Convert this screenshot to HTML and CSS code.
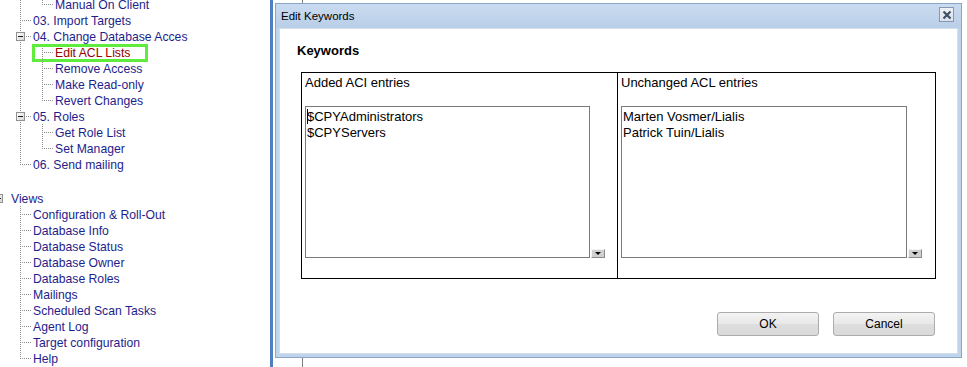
FILE: index.html
```html
<!DOCTYPE html>
<html>
<head>
<meta charset="utf-8">
<link rel="stylesheet" href="styles.css">
</head>
<body>
<div class="page">
  <div class="tree">
    <div class="row"><span class="c"></span><span class="c pipe"></span><span class="c elbow"></span><span class="t">Manual On Client</span></div>
    <div class="row"><span class="c"></span><span class="c tee"></span><span class="t">03. Import Targets</span></div>
    <div class="row"><span class="c"></span><span class="c tee"><i class="exp"></i></span><span class="t">04. Change Database Acces</span></div>
    <div class="row"><span class="c"></span><span class="c pipe"></span><span class="c tee"></span><span class="t sel">Edit ACL Lists</span></div>
    <div class="row"><span class="c"></span><span class="c pipe"></span><span class="c tee"></span><span class="t">Remove Access</span></div>
    <div class="row"><span class="c"></span><span class="c pipe"></span><span class="c tee"></span><span class="t">Make Read-only</span></div>
    <div class="row"><span class="c"></span><span class="c pipe"></span><span class="c elbow"></span><span class="t">Revert Changes</span></div>
    <div class="row"><span class="c"></span><span class="c tee"><i class="exp"></i></span><span class="t">05. Roles</span></div>
    <div class="row"><span class="c"></span><span class="c pipe"></span><span class="c tee"></span><span class="t">Get Role List</span></div>
    <div class="row"><span class="c"></span><span class="c pipe"></span><span class="c elbow"></span><span class="t">Set Manager</span></div>
    <div class="row"><span class="c"></span><span class="c elbow"></span><span class="t">06. Send mailing</span></div>
    <div class="spacer"></div>
    <div class="row"><span class="c"><i class="exp plus"></i></span><span class="t">Views</span></div>
    <div class="row"><span class="c"></span><span class="c tee"></span><span class="t">Configuration &amp; Roll-Out</span></div>
    <div class="row"><span class="c"></span><span class="c tee"></span><span class="t">Database Info</span></div>
    <div class="row"><span class="c"></span><span class="c tee"></span><span class="t">Database Status</span></div>
    <div class="row"><span class="c"></span><span class="c tee"></span><span class="t">Database Owner</span></div>
    <div class="row"><span class="c"></span><span class="c tee"></span><span class="t">Database Roles</span></div>
    <div class="row"><span class="c"></span><span class="c tee"></span><span class="t">Mailings</span></div>
    <div class="row"><span class="c"></span><span class="c tee"></span><span class="t">Scheduled Scan Tasks</span></div>
    <div class="row"><span class="c"></span><span class="c tee"></span><span class="t">Agent Log</span></div>
    <div class="row"><span class="c"></span><span class="c tee"></span><span class="t">Target configuration</span></div>
    <div class="row"><span class="c"></span><span class="c elbow"></span><span class="t">Help</span></div>
  </div>
  <div class="bar"></div>
  <div class="ws"><div class="ws-line"></div></div>

  <div class="dlg">
    <div class="title">Edit Keywords
      <span class="close"><svg width="10" height="10" viewBox="0 0 10 10"><path d="M1.5 1.5 L8.5 8.5 M8.5 1.5 L1.5 8.5" stroke="#3f4f66" stroke-width="2.2" fill="none"/></svg></span>
    </div>
    <div class="body">
      <div class="h">Keywords</div>
      <div class="box">
        <div class="col col1">
          <div class="lbl">Added ACI entries</div>
          <div class="lrow">
            <div class="list"><div><span class="caret"></span>$CPYAdministrators</div><div>$CPYServers</div></div>
            <span class="arrow"></span>
          </div>
        </div>
        <div class="col col2">
          <div class="lbl">Unchanged ACL entries</div>
          <div class="lrow">
            <div class="list list2"><div>Marten Vosmer/Lialis</div><div>Patrick Tuin/Lialis</div></div>
            <span class="arrow"></span>
          </div>
        </div>
      </div>
      <div class="btns">
        <button class="btn">OK</button>
        <button class="btn">Cancel</button>
      </div>
    </div>
  </div>
</div>
</body>
</html>
```

FILE: styles.css
```css
*, *::before, *::after { box-sizing: border-box; }
body {
  margin: 0;
  background: #fff;
  font-family: "Liberation Sans", Arial, sans-serif;
  overflow: hidden;
}
.page {
  position: relative;
  display: flex;
  width: 967px;
  height: 367px;
  overflow: hidden;
}

/* tree */
.tree {
  flex: none;
  width: 283px;
  margin: -4px 0 0 -13px;
  font-size: 12.2px;
  color: #1e1e8c;
}
.row { display: flex; height: 16px; }
.spacer { height: 18px; }
.c { flex: none; width: 22px; height: 16px; position: relative; }
.pipe::before, .tee::before, .elbow::before {
  content: "";
  position: absolute;
  left: 11px;
  top: 0;
  width: 1px;
  height: 16px;
  background: repeating-linear-gradient(to bottom, #8c8c8c 0 1px, transparent 1px 2px);
}
.elbow::before { height: 9px; }
.tee::after, .elbow::after {
  content: "";
  position: absolute;
  left: 12px;
  top: 8px;
  width: 10px;
  height: 1px;
  background: repeating-linear-gradient(to right, transparent 0 1px, #8c8c8c 1px 2px);
}
.exp {
  position: absolute;
  left: 7px;
  top: 4px;
  width: 9px;
  height: 9px;
  border: 1px solid #919191;
  background: linear-gradient(135deg, #ffffff, #d6d6d6);
  z-index: 1;
}
.exp::before {
  content: "";
  position: absolute;
  left: 1px;
  top: 3px;
  width: 5px;
  height: 1px;
  background: #1a1a1a;
}
.plus::after {
  content: "";
  position: absolute;
  left: 3px;
  top: 1px;
  width: 1px;
  height: 5px;
  background: #1a1a1a;
}
.t {
  position: relative;
  margin-left: 2px;
  height: 16px;
  line-height: 18px;
  white-space: nowrap;
}
.sel { color: #990000; }
.sel::before {
  content: "";
  position: absolute;
  left: -23px;
  top: 0;
  width: 116px;
  height: 18px;
  border: 3px solid #5fec3c;
}

/* background window */
.bar { flex: none; width: 3px; background: #4f7fc0; }
.ws { flex: 1; }
.ws-line { margin-left: 29px; width: 1px; height: 100%; background: #7f7f7f; }

/* dialog */
.dlg {
  position: absolute;
  left: 275px;
  top: 3px;
  width: 687px;
  height: 355px;
  border: 1px solid #8ba5c8;
  background: #c0d4eb;
  display: flex;
  flex-direction: column;
}
.title {
  position: relative;
  flex: none;
  height: 24px;
  display: flex;
  align-items: center;
  padding: 0 0 1px 5px;
  font-size: 11.5px;
  color: #000;
  background: linear-gradient(#c9dbef, #b9cfe8);
}
.close {
  position: absolute;
  right: 7px;
  top: 3px;
  width: 15px;
  height: 15px;
  border: 1px solid #8799b0;
  background: linear-gradient(#eef2f7, #d9e1eb);
  display: flex;
  align-items: center;
  justify-content: center;
}
.body {
  flex: 1;
  margin: 0 3px 3px;
  background: #fff;
  border: 1px solid #d3deeb;
  padding: 13px 21px 0 17px;
  display: flex;
  flex-direction: column;
}
.h { font-weight: bold; font-size: 13px; line-height: 17px; height: 16px; color: #000; }
.box {
  margin: 14px 0 0 4px;
  height: 207px;
  border: 1px solid #000;
  display: flex;
}
.col {
  display: flex;
  flex-direction: column;
  padding: 2px 0 0 3px;
}
.col1 { width: 316px; border-right: 1px solid #000; }
.col2 { flex: 1; }
.lbl { font-size: 13px; line-height: 16px; height: 16px; color: #000; }
.lrow { display: flex; align-items: flex-end; margin-top: 15px; }
.list {
  width: 285px;
  height: 152px;
  border: 1px solid #7a7a7a;
  padding: 2px 1px 1px;
  font-size: 13px;
  line-height: 16px;
  color: #000;
}
.list2 { width: 286px; }
.caret {
  display: inline-block;
  width: 1px;
  height: 15px;
  background: #000;
  vertical-align: -3px;
  margin-right: -1px;
}
.arrow {
  position: relative;
  flex: none;
  width: 14px;
  height: 9px;
  margin-left: 1px;
  background: #d0d0d0;
  border: 1px solid;
  border-color: #f4f4f4 #8a8a8a #8a8a8a #f4f4f4;
}
.arrow::before {
  content: "";
  position: absolute;
  left: 3px;
  top: 2px;
  border-left: 3px solid transparent;
  border-right: 3px solid transparent;
  border-top: 3px solid #000;
}
.btns {
  display: flex;
  justify-content: flex-end;
  gap: 14px;
  margin: 33px 1px 0 0;
}
.btn {
  width: 102px;
  height: 24px;
  padding: 0;
  border: 1px solid #acacac;
  border-radius: 3px;
  background: linear-gradient(#f3f3f3, #e8e8e8 50%, #dedede 50%, #d9d9d9);
  font-family: "Liberation Sans", Arial, sans-serif;
  font-size: 12px;
  color: #000;
}
```
